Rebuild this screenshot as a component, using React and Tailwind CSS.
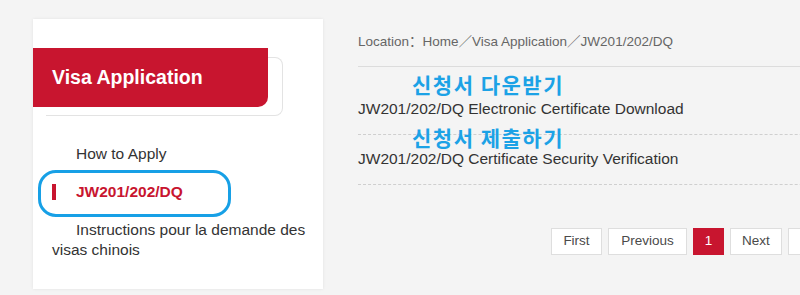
const MENU = [
  { label: 'How to Apply' },
  { label: 'JW201/202/DQ', active: true },
  { label: 'Instructions pour la demande des visas chinois', wrap: true },
];

const ROWS = [
  { note: '신청서 다운받기', text: 'JW201/202/DQ Electronic Certificate Download' },
  { note: '신청서 제출하기', text: 'JW201/202/DQ Certificate Security Verification' },
];

const PAGES = [
  { label: 'First', w: 'w-[51px]' },
  { label: 'Previous', w: 'w-[79px]' },
  { label: '1', w: 'w-[31px]', active: true },
  { label: 'Next', w: 'w-[52px]' },
  { label: 'Last', w: 'w-[64px]' },
];

function Sidebar() {
  return (
    <aside className="mt-[19px] ml-[33px] w-[290px] h-[270px] shrink-0 bg-white shadow-[0_0_3px_rgba(0,0,0,0.08)] pt-[29px]">
      {/* Title band */}
      <div className="relative w-[235px] h-[59px]">
        <div className="absolute left-[13px] top-[9px] w-[237px] h-[59px] border-t border-r border-b border-[#e3e3e3] rounded-r-[8px] bg-white" />
        <div className="relative h-full bg-[#c8152f] rounded-br-[10px] flex items-center pl-[19px]">
          <h2 className="text-white font-bold text-[19.5px] leading-none">Visa Application</h2>
        </div>
      </div>

      {/* Menu */}
      <ul className="mt-[37px] flex flex-col gap-[18px] text-[15.5px] leading-[20px] text-[#333] pr-[8px]">
        {MENU.map(m =>
          m.active ? (
            <li key={m.label} className="flex items-center pl-[19px]">
              <span className="w-[4px] h-[16px] bg-[#c8152f]" />
              <span className="ml-[20px] font-bold text-[#c8152f]">{m.label}</span>
            </li>
          ) : m.wrap ? (
            <li key={m.label} className="pl-[19px] indent-[24px]">{m.label}</li>
          ) : (
            <li key={m.label} className="pl-[43px]">{m.label}</li>
          )
        )}
      </ul>
    </aside>
  );
}

export default function App() {
  return (
    <div
      className="relative w-[800px] h-[295px] overflow-hidden bg-[#f4f4f4] flex items-start"
      style={{ fontFamily: '"Liberation Sans", Arial, "Noto Sans CJK SC", sans-serif' }}
    >
      <Sidebar />

      <main className="relative mt-[32px] ml-[35px] w-[520px] shrink-0">
        {/* Breadcrumb */}
        <div className="text-[13.5px] leading-[20px] text-[#666] pb-[14px] border-b border-[#dcdcdc]">
          Location：Home／Visa Application／JW201/202/DQ
        </div>

        {/* List */}
        <ul className="pt-[18px] text-[15.5px] leading-[21px] text-[#333]">
          {ROWS.map(r => (
            <li key={r.text} className="relative pt-[13px] pb-[15px] border-b border-dashed border-[#cfcfcf]">
              {r.text}
            </li>
          ))}
        </ul>

        {/* Pagination */}
        <div className="mt-[43px] pl-[193px] flex gap-[6px] text-[13.5px] text-[#4a4a4a]">
          {PAGES.map(p => (
            <button
              key={p.label}
              className={`${p.w} h-[27px] shrink-0 border flex items-center justify-center ${
                p.active ? 'bg-[#c8152f] border-[#c8152f] text-white' : 'bg-white border-[#dedede]'
              }`}
            >
              {p.label}
            </button>
          ))}
        </div>

        {/* Korean annotations */}
        <div
          className="absolute left-[54px] top-[42px] text-[21px] leading-[21px] tracking-[1.5px] font-bold text-[#1ca2e6]"
          style={{ fontFamily: '"Noto Sans CJK KR", sans-serif' }}
        >
          {ROWS[0].note}
        </div>
        <div
          className="absolute left-[54px] top-[95px] text-[21px] leading-[21px] tracking-[1.5px] font-bold text-[#1ca2e6]"
          style={{ fontFamily: '"Noto Sans CJK KR", sans-serif' }}
        >
          {ROWS[1].note}
        </div>
      </main>

      {/* Blue highlight around active menu item */}
      <div className="absolute left-[38px] top-[170px] w-[193px] h-[47px] border-[3px] border-[#17a0e6] rounded-[18px] pointer-events-none" />
    </div>
  );
}
